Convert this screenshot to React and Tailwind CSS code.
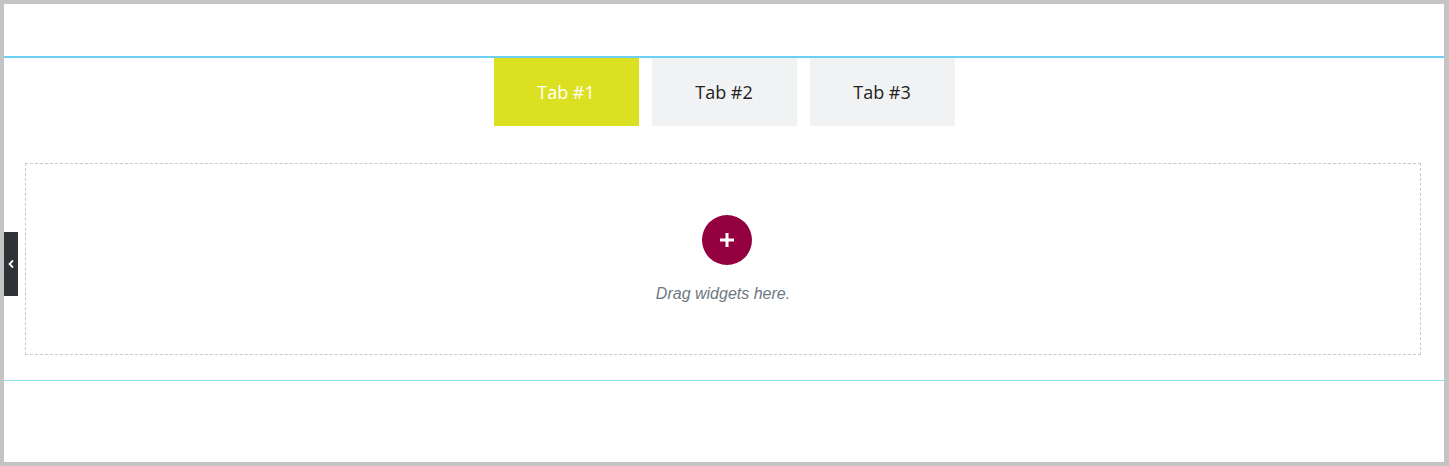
import React from "react";

function App() {
  const tabs = ["Tab #1", "Tab #2", "Tab #3"];

  return (
    <div className="w-[1449px] h-[466px] bg-[#c4c4c4] pt-[4px] pl-[4px] pr-[5px] pb-[4px]">
      <div className="relative w-full h-full bg-white flex flex-col">
        <div className="h-[52px]" />
        <div className="h-[2px] bg-[#6dd0f2]" />
        <div className="pb-[25px]">
          <div className="flex justify-center gap-[13px]">
            {tabs.map((tab, i) => (
              <div
                key={tab}
                className={
                  i === 0
                    ? "w-[145px] h-[68px] flex items-center justify-center bg-[#dbe021] text-white text-[18px] font-['Open_Sans',sans-serif]"
                    : "w-[145px] h-[68px] flex items-center justify-center bg-[#f1f2f3] text-[#222] text-[18px] font-['Open_Sans',sans-serif]"
                }
              >
                {tab}
              </div>
            ))}
          </div>
          <div className="mt-[37px] ml-[21px] mr-[23px] h-[192px] border border-dashed border-[#c9c9c9] flex flex-col items-center pt-[51px]">
            <div className="ml-[8px] w-[50px] h-[50px] rounded-full bg-[#93003f] flex items-center justify-center">
              <svg width="18" height="18" viewBox="0 0 18 18">
                <path d="M9 2v14M2 9h14" stroke="white" strokeWidth="3" strokeLinecap="butt" />
              </svg>
            </div>
            <div className="mt-[17px] text-[16px] italic text-[#6d7882] font-['Liberation_Sans',Arial,sans-serif]">
              Drag widgets here.
            </div>
          </div>
        </div>
        <div className="h-px bg-[#8fdcf2]" />
        <div className="absolute left-0 top-[228px] w-[14px] h-[64px] bg-[#2f3237] flex items-center justify-center">
          <svg width="8" height="10" viewBox="0 0 8 10">
            <path d="M6 1.5L2.5 5L6 8.5" stroke="white" strokeWidth="1.8" fill="none" />
          </svg>
        </div>
      </div>
    </div>
  );
}

export default App;
